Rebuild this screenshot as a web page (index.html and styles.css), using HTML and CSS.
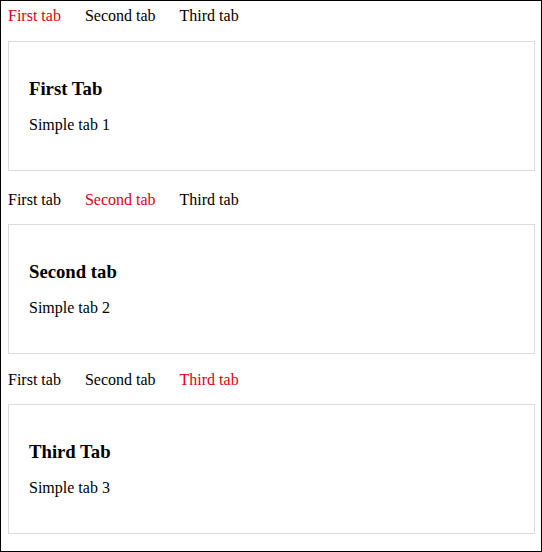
FILE: index.html
```html
<!DOCTYPE html>
<html lang="en">
<head>
<meta charset="utf-8">
<title>Tabs</title>
<link rel="stylesheet" href="styles.css">
</head>
<body>
  <section class="tabset tabset--first">
    <nav class="tabs">
      <a class="tab tab--active">First tab</a>
      <a class="tab">Second tab</a>
      <a class="tab">Third tab</a>
    </nav>
    <div class="panel">
      <h3 class="panel-title">First Tab</h3>
      <p class="panel-text">Simple tab 1</p>
    </div>
  </section>

  <section class="tabset tabset--loose">
    <nav class="tabs">
      <a class="tab">First tab</a>
      <a class="tab tab--active">Second tab</a>
      <a class="tab">Third tab</a>
    </nav>
    <div class="panel">
      <h3 class="panel-title">Second tab</h3>
      <p class="panel-text">Simple tab 2</p>
    </div>
  </section>

  <section class="tabset">
    <nav class="tabs">
      <a class="tab">First tab</a>
      <a class="tab">Second tab</a>
      <a class="tab tab--active">Third tab</a>
    </nav>
    <div class="panel">
      <h3 class="panel-title">Third Tab</h3>
      <p class="panel-text">Simple tab 3</p>
    </div>
  </section>
</body>
</html>
```
FILE: styles.css
```css
html, body {
  margin: 0;
  padding: 0;
}

body {
  box-sizing: border-box;
  min-height: 100vh;
  border: 1px solid #000;
  padding: 0 6px 0 7px;
  font-family: "Liberation Serif", "Times New Roman", serif;
  font-size: 16px;
  color: #000;
  background: #fff;
}

.tabset {
  margin-top: 16px;
}

.tabset--first {
  margin-top: 5px;
}

.tabset--loose {
  margin-top: 19px;
}

.tabs {
  display: flex;
  gap: 24px;
  padding-top: 1px;
  line-height: 18px;
  margin-bottom: 15px;
}

.tabset--first .tabs {
  margin-bottom: 16px;
}

.tab {
  color: #000;
  text-decoration: none;
  cursor: pointer;
}

.tab--active {
  color: #e3000f;
}

.panel {
  border: 1px solid #dcdcdc;
  padding: 36px 20px 36px;
}

.panel-title {
  margin: 0 0 16px;
  font-size: 18.72px;
  line-height: 22px;
  font-weight: bold;
}

.panel-text {
  margin: 0;
  line-height: 18px;
}
```
